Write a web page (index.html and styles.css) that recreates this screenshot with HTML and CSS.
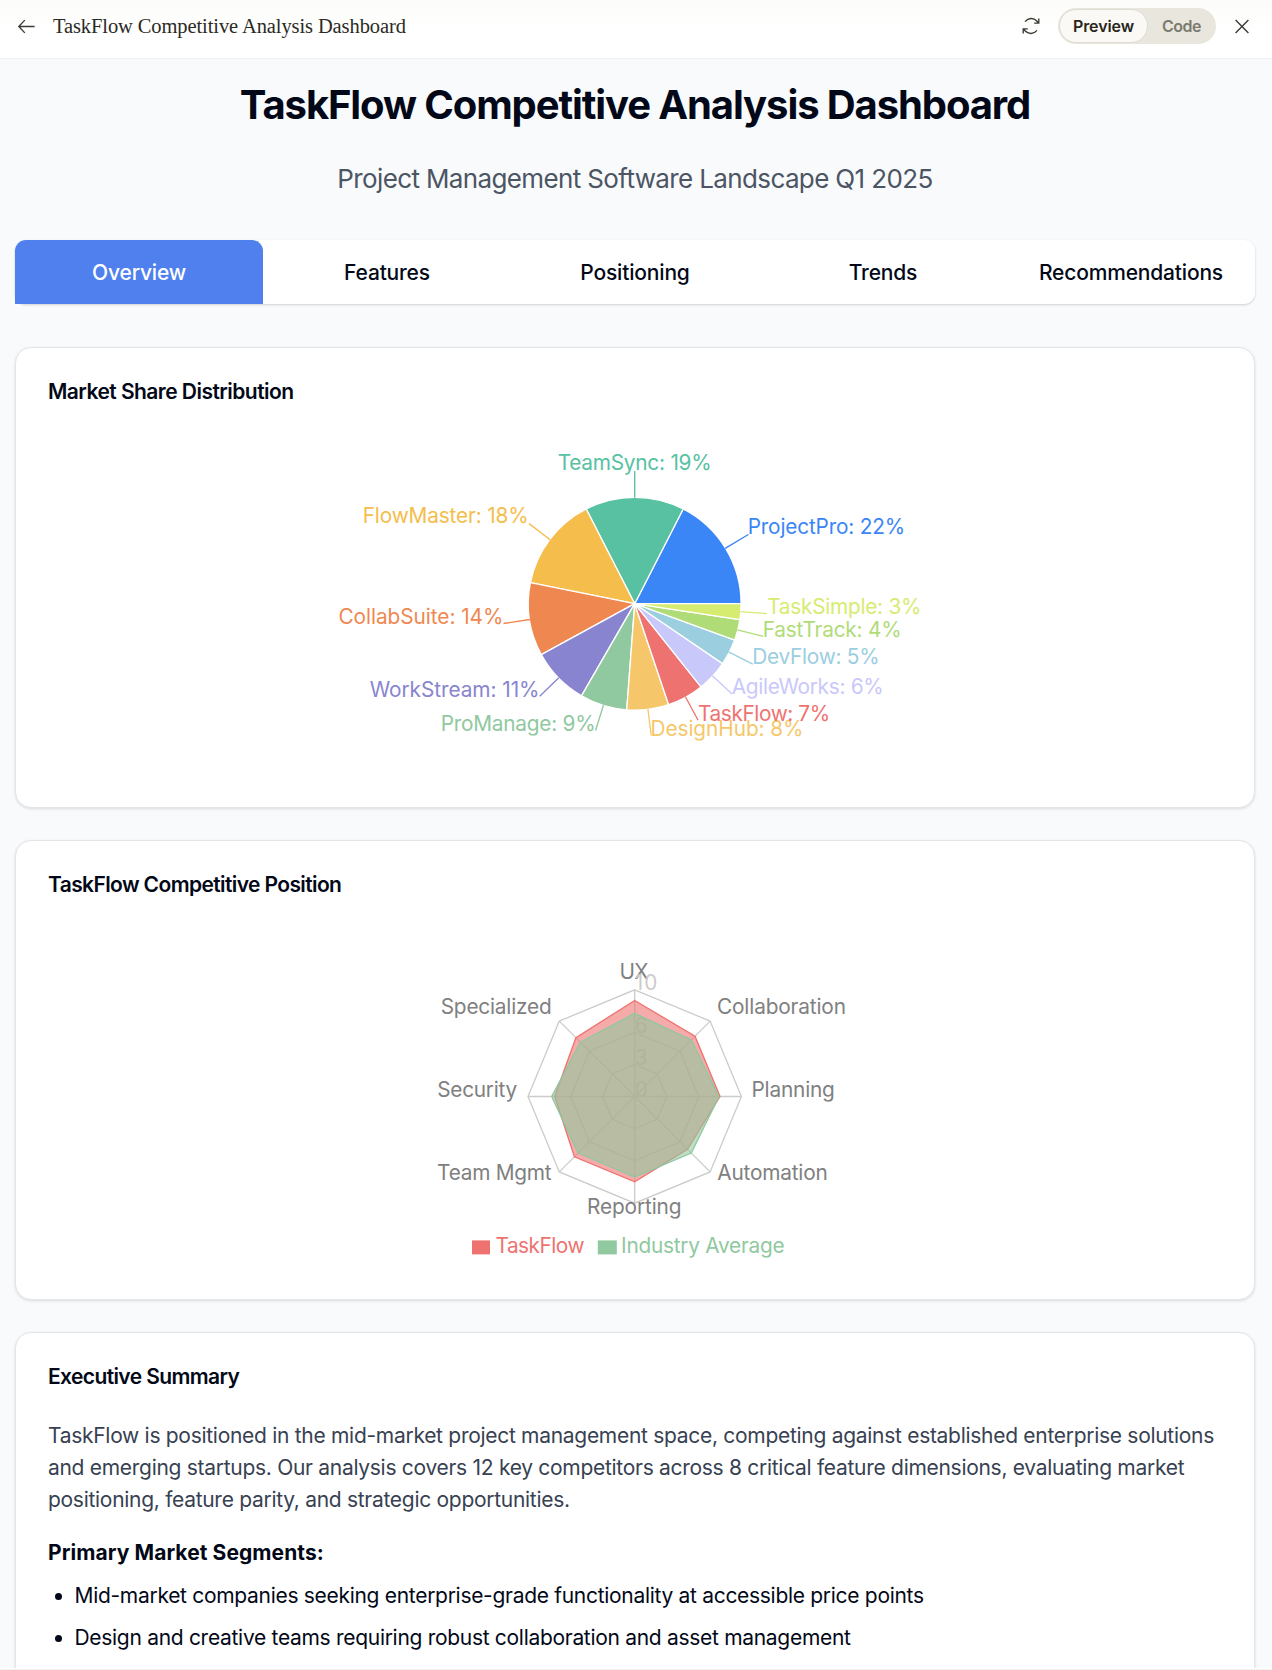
FILE: index.html
```
<!DOCTYPE html>
<html lang="en">
<head>
<meta charset="utf-8">
<title>TaskFlow Competitive Analysis Dashboard</title>
<link rel="stylesheet" href="styles.css">
</head>
<body>
<header class="topbar">
  <svg class="icon back" width="18" height="18" viewBox="0 0 18 18"><path d="M17.6 9.5H2M7.8 3.1 1.8 9.5l6 6.4"/></svg>
  <span class="doc-title">TaskFlow Competitive Analysis Dashboard</span>
  <svg class="icon refresh" width="20" height="20" viewBox="0 0 20 20"><path d="M4 5.6C7.2 1.7 12.6 1.4 16 5.2L17.6 7M17.8 2.6V7.1H13.2M16 14.4C12.8 18.3 7.4 18.6 4 14.8L2.4 13M2.2 17.4V12.9H6.8"/></svg>
  <div class="toggle">
    <span class="toggle-item active">Preview</span>
    <span class="toggle-item">Code</span>
  </div>
  <svg class="icon close" width="16" height="16" viewBox="0 0 16 16"><path d="M1.6 2 14.4 15M14.4 2 1.6 15"/></svg>
</header>
<main class="page">
  <h1 class="page-title">TaskFlow Competitive Analysis Dashboard</h1>
  <p class="page-subtitle">Project Management Software Landscape Q1 2025</p>
  <nav class="tabs">
    <a class="tab active">Overview</a>
    <a class="tab">Features</a>
    <a class="tab">Positioning</a>
    <a class="tab">Trends</a>
    <a class="tab">Recommendations</a>
  </nav>
  <section class="card">
    <h2 class="card-title wide">Market Share Distribution</h2>
    <svg class="chart pie" width="1174" height="367" viewBox="-586.7 -195.7 1174 367">
      <g class="slices">
        <path class="c-blue" d="M0 0L106.4 0A106.4 106.4 0 0 0 48.5 -94.7Z"/>
        <path class="c-teal" d="M0 0L48.5 -94.7A106.4 106.4 0 0 0 -48.5 -94.7Z"/>
        <path class="c-amber" d="M0 0L-48.5 -94.7A106.4 106.4 0 0 0 -104.3 -21.1Z"/>
        <path class="c-orange" d="M0 0L-104.3 -21.1A106.4 106.4 0 0 0 -93.4 50.9Z"/>
        <path class="c-purple" d="M0 0L-93.4 50.9A106.4 106.4 0 0 0 -53.2 92.1Z"/>
        <path class="c-green" d="M0 0L-53.2 92.1A106.4 106.4 0 0 0 -7.95 106.1Z"/>
        <path class="c-gold" d="M0 0L-7.95 106.1A106.4 106.4 0 0 0 33.9 100.9Z"/>
        <path class="c-red" d="M0 0L33.9 100.9A106.4 106.4 0 0 0 66.3 83.2Z"/>
        <path class="c-lilac" d="M0 0L66.3 83.2A106.4 106.4 0 0 0 87.9 59.9Z"/>
        <path class="c-sky" d="M0 0L87.9 59.9A106.4 106.4 0 0 0 100 36.4Z"/>
        <path class="c-lime" d="M0 0L100 36.4A106.4 106.4 0 0 0 105.2 15.9Z"/>
        <path class="c-yellow" d="M0 0L105.2 15.9A106.4 106.4 0 0 0 106.4 0Z"/>
      </g>
      <g class="leaders">
        <path class="c-blue" d="M90.5 -55.3L113.7 -69.2"/>
        <path class="c-teal" d="M0 -106V-132.7"/>
        <path class="c-amber" d="M-84.5 -64L-105.7 -80.1"/>
        <path class="c-orange" d="M-104.8 15.8L-131.2 19.8"/>
        <path class="c-purple" d="M-75.9 74L-95 92.6"/>
        <path class="c-green" d="M-31.2 101.3L-39.1 126.8"/>
        <path class="c-gold" d="M13.2 105.2L16.5 131.6"/>
        <path class="c-red" d="M50.7 93.1L63.4 116.5"/>
        <path class="c-lilac" d="M77.7 72.1L97.3 90.2"/>
        <path class="c-sky" d="M94.3 48.4L118.1 60.5"/>
        <path class="c-lime" d="M102.7 26.2L128.6 32.7"/>
        <path class="c-yellow" d="M105.7 7.9L132.3 9.9"/>
      </g>
      <g class="labels">
        <text class="c-blue" x="113" y="-70" textLength="157.5">ProjectPro: 22%</text>
        <text class="c-teal" x="-77" y="-134" textLength="154">TeamSync: 19%</text>
        <text class="c-amber" x="-272" y="-81" textLength="166">FlowMaster: 18%</text>
        <text class="c-orange" x="-296.3" y="20" textLength="165">CollabSuite: 14%</text>
        <text class="c-purple" x="-265" y="93" textLength="169.8">WorkStream: 11%</text>
        <text class="c-green" x="-194" y="127" textLength="155">ProManage: 9%</text>
        <text class="c-gold" x="15.8" y="132" textLength="153">DesignHub: 8%</text>
        <text class="c-red" x="63.4" y="117" textLength="132">TaskFlow: 7%</text>
        <text class="c-lilac" x="97" y="90" textLength="152">AgileWorks: 6%</text>
        <text class="c-sky" x="117.5" y="60" textLength="127.5">DevFlow: 5%</text>
        <text class="c-lime" x="128" y="33" textLength="139">FastTrack: 4%</text>
        <text class="c-yellow" x="132.5" y="10" textLength="154.3">TaskSimple: 3%</text>
      </g>
    </svg>
  </section>
  <section class="card">
    <h2 class="card-title">TaskFlow Competitive Position</h2>
    <svg class="chart radar" width="1174" height="366" viewBox="-586.7 -195.5 1174 366">
      <g class="grid">
        <path d="M0 -106.7V106.7M-106.7 0H106.7M-75.4 -75.4L75.4 75.4M-75.4 75.4L75.4 -75.4"/>
        <path d="M0 -32L22.6 -22.6 32 0 22.6 22.6 0 32 -22.6 22.6 -32 0 -22.6 -22.6Z"/>
        <path d="M0 -64L45.3 -45.3 64 0 45.3 45.3 0 64 -45.3 45.3 -64 0 -45.3 -45.3Z"/>
        <path d="M0 -106.7L75.4 -75.4 106.7 0 75.4 75.4 0 106.7 -75.4 75.4 -106.7 0 -75.4 -75.4Z"/>
      </g>
      <g class="axis-labels">
        <text x="-15.3" y="-117.6" textLength="29">UX</text>
        <text x="82.3" y="-82.6" textLength="129">Collaboration</text>
        <text x="116.7" y="0.4" textLength="83.5">Planning</text>
        <text x="82.6" y="83.4" textLength="110.5">Automation</text>
        <text x="-47.7" y="117.4" textLength="94.5">Reporting</text>
        <text x="-197.6" y="83.4" textLength="114.5">Team Mgmt</text>
        <text x="-197.5" y="0.4" textLength="80">Security</text>
        <text x="-194" y="-82.6" textLength="111">Specialized</text>
      </g>
      <g class="ticks">
        <text x="0" y="0.4">0</text>
        <text x="0" y="-31.6">3</text>
        <text x="0" y="-63.6">6</text>
        <text x="0" y="-106.2" textLength="22.6">10</text>
      </g>
      <path class="area-red" d="M0 -96L60.3 -60.3 85.3 0 52.8 52.8 0 85.3 -60.3 60.3 -80 0 -58.8 -58.8Z"/>
      <path class="area-green" d="M0 -83.2L56.6 -56.6 84.3 0 56.6 56.6 0 80.5 -56.6 56.6 -83 0 -54.3 -54.3Z"/>
      <g class="labels">
        <rect class="c-red" x="-162.7" y="143.9" width="18" height="14"/>
        <text class="c-red" x="-139.2" y="156.9" textLength="89">TaskFlow</text>
        <rect class="c-green" x="-36.9" y="143.9" width="19" height="14"/>
        <text class="c-green" x="-13.6" y="156.9" textLength="163.5">Industry Average</text>
      </g>
    </svg>
  </section>
  <section class="card last">
    <h2 class="card-title">Executive Summary</h2>
    <p class="summary">TaskFlow is positioned in the mid-market project management space, competing against established enterprise solutions and emerging startups. Our analysis covers 12 key competitors across 8 critical feature dimensions, evaluating market positioning, feature parity, and strategic opportunities.</p>
    <h3 class="segments-title">Primary Market Segments:</h3>
    <ul class="segments">
      <li>Mid-market companies seeking enterprise-grade functionality at accessible price points</li>
      <li>Design and creative teams requiring robust collaboration and asset management</li>
    </ul>
  </section>
</main>
<footer class="bottom-edge"></footer>
</body>
</html>
```
FILE: styles.css
```
* { box-sizing: border-box; }

body {
  margin: 0;
  height: 1670px;
  display: flex;
  flex-direction: column;
  overflow: hidden;
  background: #fff;
  color: #020817;
  font-family: Inter, "Liberation Sans", sans-serif;
}

.topbar {
  flex: none;
  height: 59px;
  padding: 0 22px 6px 17px;
  display: flex;
  align-items: center;
  background: linear-gradient(#fcfcfa, #fff 32px);
  border-bottom: 1px solid #eef0f1;
}

.icon {
  flex: none;
  fill: none;
  stroke: #3a3a32;
  stroke-width: 1.35;
}

.doc-title {
  flex: 1;
  margin-left: 18px;
  font: 20.5px "Liberation Serif", serif;
  letter-spacing: -0.1px;
  color: #2b2a24;
}

.refresh { margin-right: 17px; }

.toggle {
  display: flex;
  width: 158px;
  height: 36px;
  padding: 1px;
  border-radius: 18px;
  background: #e9e6de;
}

.toggle-item {
  flex: 1;
  display: flex;
  align-items: center;
  justify-content: center;
  border-radius: 17px;
  font-size: 16px;
  font-weight: 600;
  letter-spacing: -0.5px;
  color: #7b7a6e;
}

.toggle-item.active {
  flex: none;
  width: 89px;
  letter-spacing: -0.1px;
  background: #faf9f5;
  border: 1px solid #dfdcd4;
  color: #29261b;
}

.close { margin-left: 18px; }

.page {
  flex: 1;
  min-height: 0;
  overflow: hidden;
  padding: 22px 17px 0 15px;
  background: #f9fafc;
}

.page-title {
  margin: 0;
  text-align: center;
  font-size: 40px;
  line-height: 48px;
  font-weight: 700;
  letter-spacing: -1.1px;
}

.page-subtitle {
  margin: 32px 0 43px;
  text-align: center;
  font-size: 26px;
  line-height: 36px;
  letter-spacing: -0.63px;
  color: #4b5563;
}

.tabs {
  display: grid;
  grid-template-columns: repeat(5, 1fr);
  height: 64px;
  margin-bottom: 43px;
  border-radius: 11px;
  background: #fff;
  box-shadow: 0 1px 3px rgba(0, 0, 0, 0.1), 0 1px 2px rgba(0, 0, 0, 0.08);
}

.tab {
  display: flex;
  align-items: center;
  justify-content: center;
  padding-top: 1px;
  font-size: 21px;
  font-weight: 500;
  letter-spacing: -0.18px;
}

.tab.active {
  border-radius: 11px 11px 0 0;
  background: #4f80ee;
  color: #fff;
}

.card {
  margin-bottom: 32px;
  padding: 28px 32px 32px;
  border: 1px solid #e3e5e9;
  border-radius: 16px;
  background: #fff;
  box-shadow: 0 1px 3px rgba(0, 0, 0, 0.12);
}

.card.last {
  height: 400px;
  margin-bottom: 0;
}

.card-title {
  margin: 0;
  font-size: 21px;
  line-height: 32px;
  font-weight: 600;
  letter-spacing: -0.61px;
}

.card-title.wide { letter-spacing: -0.54px; }

.chart {
  display: block;
  font-size: 20.8px;
}

.slices path {
  stroke: #fff;
  stroke-width: 1.33;
  stroke-linejoin: round;
}

.leaders path { stroke-width: 1.33; }

.c-blue { fill: #3b86f6; stroke: #3b86f6; }
.c-teal { fill: #57c1a2; stroke: #57c1a2; }
.c-amber { fill: #f5bd4c; stroke: #f5bd4c; }
.c-orange { fill: #ef8850; stroke: #ef8850; }
.c-purple { fill: #8884d0; stroke: #8884d0; }
.c-green { fill: #90c8a0; stroke: #90c8a0; }
.c-gold { fill: #f6c76a; stroke: #f6c76a; }
.c-red { fill: #ee7370; stroke: #ee7370; }
.c-lilac { fill: #c9c8fb; stroke: #c9c8fb; }
.c-sky { fill: #9bcedf; stroke: #9bcedf; }
.c-lime { fill: #b0dc78; stroke: #b0dc78; }
.c-yellow { fill: #d6ec70; stroke: #d6ec70; }

.labels text,
.labels rect { stroke: none; }

.grid path {
  fill: none;
  stroke: #ccc;
  stroke-width: 1.33;
}

.axis-labels { fill: #808080; }
.ticks { fill: #ccc; }

.area-red {
  fill: #ee7370;
  fill-opacity: 0.6;
  stroke: #ee7370;
  stroke-width: 1.33;
}

.area-green {
  fill: #90c8a0;
  fill-opacity: 0.6;
  stroke: #90c8a0;
  stroke-width: 1.33;
}

.summary {
  margin: 27px 0 21px;
  font-size: 21px;
  line-height: 32px;
  letter-spacing: -0.29px;
  color: #374151;
}

.segments-title {
  margin: 0 0 11px;
  font-size: 21px;
  line-height: 32px;
  font-weight: 700;
  letter-spacing: 0.08px;
}

.segments {
  margin: 0;
  padding-left: 26.5px;
  font-size: 21px;
  line-height: 32px;
  letter-spacing: -0.3px;
}

.segments li { margin-bottom: 10px; }

.bottom-edge {
  flex: none;
  height: 2px;
  border-bottom: 1px solid #eef0f1;
  background: #fff;
}
```
